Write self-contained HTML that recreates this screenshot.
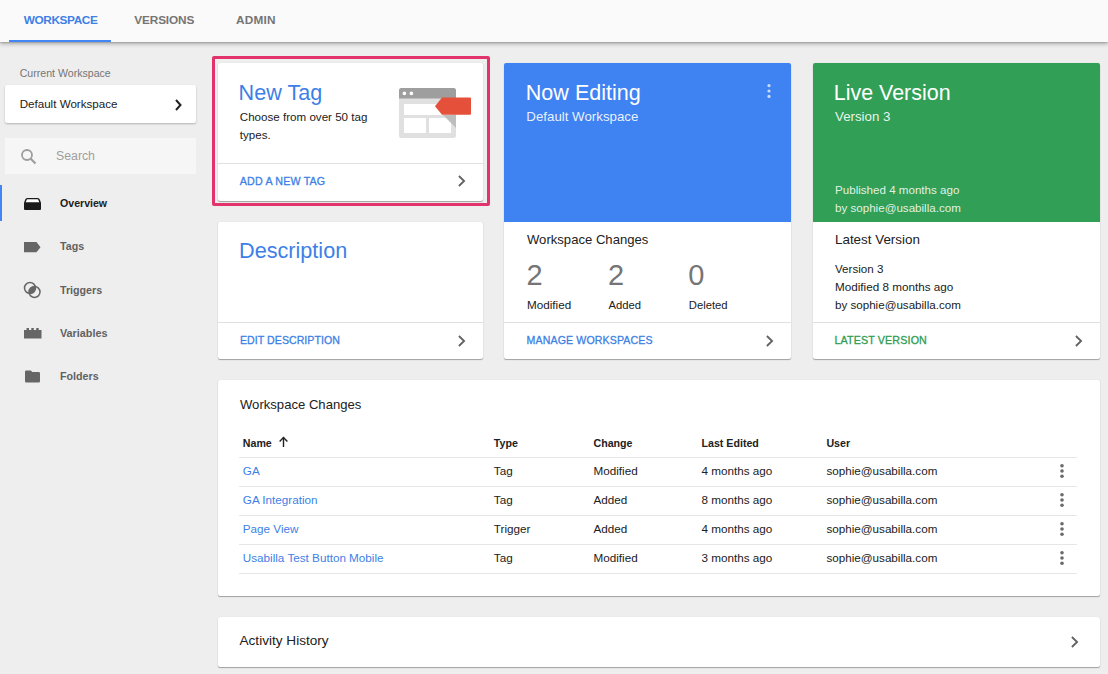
<!DOCTYPE html>
<html><head><meta charset="utf-8"><style>
html,body{margin:0;padding:0;}
body{width:1108px;height:674px;overflow:hidden;background:#eeeeee;position:relative;font-family:"Liberation Sans",sans-serif;}
.t{position:absolute;line-height:1;white-space:pre;}
div{box-sizing:border-box;}
</style></head><body>
<div style="position:absolute;left:0px;top:0px;width:1108px;height:42px;background:#fafafa;box-shadow:0 2px 4px rgba(0,0,0,0.28),0 1px 1px rgba(0,0,0,0.1);z-index:2"></div>
<div style="position:absolute;left:0;top:0;width:1108px;height:42px;z-index:3">
<div class="t" style="left:23.80px;top:15.01px;font-size:11.8px;font-weight:700;color:#3d7fe6;letter-spacing:-0.39px">WORKSPACE</div>
<div class="t" style="left:134.30px;top:15.01px;font-size:11.8px;font-weight:700;color:#757575;letter-spacing:-0.14px">VERSIONS</div>
<div class="t" style="left:236.10px;top:15.01px;font-size:11.8px;font-weight:700;color:#757575;letter-spacing:0.2px">ADMIN</div>
<div style="position:absolute;left:9px;top:40px;width:102px;height:2px;background:#4285f4"></div>
</div>
<div class="t" style="left:19.70px;top:67.93px;font-size:10.6px;font-weight:400;color:#757575;">Current Workspace</div>
<div style="position:absolute;left:5px;top:85px;width:191px;height:37.5px;background:#fff;border-radius:2px;box-shadow:0 1px 2px rgba(0,0,0,0.25)"></div>
<div class="t" style="left:19.70px;top:98.18px;font-size:11.6px;font-weight:400;color:#212121;">Default Workspace</div>
<svg style="position:absolute;left:173px;top:98px" width="10.5" height="14"><path d="M3.00 2 L7.50 7.00 L3.00 12" fill="none" stroke="#212121" stroke-width="2"/></svg>
<div style="position:absolute;left:5px;top:138px;width:191px;height:35.5px;background:#f6f6f6"></div>
<svg style="position:absolute;left:19px;top:147px" width="20" height="20"><circle cx="8" cy="8" r="5" fill="none" stroke="#9e9e9e" stroke-width="1.8"/><path d="M11.5 11.5 L16.5 16.5" stroke="#9e9e9e" stroke-width="2.2"/></svg>
<div class="t" style="left:56.00px;top:149.59px;font-size:12.3px;font-weight:400;color:#9e9e9e;">Search</div>
<div style="position:absolute;left:0px;top:185px;width:2px;height:36px;background:#4285f4"></div>
<svg style="position:absolute;left:24px;top:197px" width="18" height="14"><path d="M3.5 1 H13.5 Q15.5 1 16 3 L17 6 V12 Q17 13 16 13 H1 Q0 13 0 12 V6 L1 3 Q1.5 1 3.5 1 Z" fill="#1a1a1a"/><path d="M3.8 2.3 H13.2 Q14.3 2.3 14.6 3.4 L15.3 5.3 H1.7 L2.4 3.4 Q2.7 2.3 3.8 2.3 Z" fill="#fff"/></svg>
<div class="t" style="left:60.00px;top:198.03px;font-size:10.6px;font-weight:700;color:#212121;">Overview</div>
<svg style="position:absolute;left:24px;top:241.5px" width="17" height="11"><path d="M0 0 H12.5 L16.5 5.2 L12.5 10.3 H0 Z" fill="#666"/></svg>
<div class="t" style="left:60.00px;top:241.14px;font-size:10.7px;font-weight:700;color:#616161;">Tags</div>
<svg style="position:absolute;left:23px;top:281px" width="19" height="19"><defs><clipPath id="c1"><circle cx="7" cy="7" r="5.5"/></clipPath></defs><circle cx="11.5" cy="11" r="5.5" fill="#666" clip-path="url(#c1)"/><circle cx="7" cy="7" r="5.5" fill="none" stroke="#666" stroke-width="1.5"/><circle cx="11.5" cy="11" r="5.5" fill="none" stroke="#666" stroke-width="1.5"/></svg>
<div class="t" style="left:60.00px;top:284.94px;font-size:10.7px;font-weight:700;color:#616161;">Triggers</div>
<svg style="position:absolute;left:23.5px;top:327.5px" width="18" height="11"><path d="M0 2 H2.5 V0 H5 V2 H7.3 V0 H9.8 V2 H12.2 V0 H14.7 V2 H17.5 V10.5 H0 Z" fill="#666"/></svg>
<div class="t" style="left:60.00px;top:328.06px;font-size:10.8px;font-weight:700;color:#616161;">Variables</div>
<svg style="position:absolute;left:25px;top:369.5px" width="16" height="13"><path d="M1.2 0.5 H5.8 L7.3 2 H13.8 Q15 2 15 3.2 V11.3 Q15 12.5 13.8 12.5 H1.2 Q0 12.5 0 11.3 V1.7 Q0 0.5 1.2 0.5 Z" fill="#666"/></svg>
<div class="t" style="left:60.00px;top:371.04px;font-size:10.7px;font-weight:700;color:#616161;">Folders</div>
<div style="position:absolute;left:211.5px;top:56px;width:278.0px;height:150px;border:3px solid #e2336c;border-radius:2px;box-sizing:border-box"></div>
<div style="position:absolute;left:218px;top:63px;width:265px;height:137.5px;background:#fff;border-radius:2px;box-shadow:0 1px 1px rgba(0,0,0,0.32),0 0 1px rgba(0,0,0,0.12)"></div>
<div class="t" style="left:238.60px;top:81.72px;font-size:21.6px;font-weight:400;color:#3d7fe6;">New Tag</div>
<div class="t" style="left:239.80px;top:111.18px;font-size:11.6px;font-weight:400;color:#212121;">Choose from over 50 tag</div>
<div class="t" style="left:239.80px;top:128.78px;font-size:11.6px;font-weight:400;color:#212121;">types.</div>
<div style="position:absolute;left:218px;top:163px;width:265px;height:1px;background:#e0e0e0"></div>
<div class="t" style="left:239.80px;top:175.94px;font-size:10.7px;font-weight:400;color:#3d7fe6;-webkit-text-stroke:0.3px #3d7fe6;letter-spacing:0.17px">ADD A NEW TAG</div>
<svg style="position:absolute;left:456px;top:174px" width="11" height="14"><path d="M2.90 2 L8.10 7.00 L2.90 12" fill="none" stroke="#616161" stroke-width="1.8"/></svg>
<svg style="position:absolute;left:399px;top:88px" width="73" height="51"><rect x="0" y="0" width="57" height="50" rx="2.5" fill="#e0e0e0"/><path d="M2.5 0 H54.5 Q57 0 57 2.5 V10.5 H0 V2.5 Q0 0 2.5 0 Z" fill="#9e9e9e"/><circle cx="5.4" cy="5.4" r="1.8" fill="#fff"/><circle cx="12.4" cy="5.4" r="1.8" fill="#fff"/><rect x="5" y="16" width="47" height="11" fill="#fff"/><rect x="5" y="30" width="22" height="15" fill="#fff"/><rect x="30" y="30" width="22" height="15" fill="#fff"/><path d="M44 27 L57 27 L57 40 Z" fill="#bdbdbd"/><path d="M43 9.5 H71 Q72 9.5 72 10.5 V25.8 Q72 26.8 71 26.8 H43 L36 18.2 Z" fill="#e5503a"/></svg>
<div style="position:absolute;left:504px;top:63px;width:287px;height:295.5px;background:#fff;border-radius:2px;box-shadow:0 1px 1px rgba(0,0,0,0.32),0 0 1px rgba(0,0,0,0.12)"></div>
<div style="position:absolute;left:504px;top:63px;width:287px;height:158.5px;background:#3f82f2;border-radius:2px 2px 0 0"></div>
<div class="t" style="left:525.80px;top:81.76px;font-size:21.55px;font-weight:400;color:#fff;">Now Editing</div>
<div class="t" style="left:526.30px;top:109.54px;font-size:13.3px;font-weight:400;color:rgba(255,255,255,0.9);">Default Workspace</div>
<svg style="position:absolute;left:764.4px;top:80.8px" width="10" height="20"><circle cx="5" cy="4.60" r="1.6" fill="rgba(255,255,255,0.72)"/><circle cx="5" cy="10.00" r="1.6" fill="rgba(255,255,255,0.72)"/><circle cx="5" cy="15.40" r="1.6" fill="rgba(255,255,255,0.72)"/></svg>
<div class="t" style="left:527.00px;top:232.81px;font-size:13.1px;font-weight:400;color:#212121;">Workspace Changes</div>
<div class="t" style="left:526.50px;top:261.05px;font-size:29px;font-weight:300;color:#757575;">2</div>
<div class="t" style="left:527.00px;top:299.10px;font-size:11.7px;font-weight:400;color:#212121;">Modified</div>
<div class="t" style="left:607.90px;top:261.05px;font-size:29px;font-weight:300;color:#757575;">2</div>
<div class="t" style="left:608.40px;top:300.18px;font-size:11.25px;font-weight:400;color:#212121;">Added</div>
<div class="t" style="left:688.30px;top:261.05px;font-size:29px;font-weight:300;color:#757575;">0</div>
<div class="t" style="left:688.80px;top:300.18px;font-size:11.25px;font-weight:400;color:#212121;">Deleted</div>
<div style="position:absolute;left:504px;top:322px;width:287px;height:1px;background:#e0e0e0"></div>
<div class="t" style="left:526.50px;top:335.03px;font-size:10.6px;font-weight:400;color:#3d7fe6;-webkit-text-stroke:0.3px #3d7fe6;letter-spacing:0.13px">MANAGE WORKSPACES</div>
<svg style="position:absolute;left:764px;top:334px" width="11" height="14"><path d="M2.90 2 L8.10 7.00 L2.90 12" fill="none" stroke="#616161" stroke-width="1.8"/></svg>
<div style="position:absolute;left:813px;top:63px;width:287px;height:295.5px;background:#fff;border-radius:2px;box-shadow:0 1px 1px rgba(0,0,0,0.32),0 0 1px rgba(0,0,0,0.12)"></div>
<div style="position:absolute;left:813px;top:63px;width:287px;height:158.5px;background:#31a056;border-radius:2px 2px 0 0"></div>
<div class="t" style="left:833.80px;top:83.34px;font-size:21.45px;font-weight:400;color:#fff;">Live Version</div>
<div class="t" style="left:835.00px;top:109.54px;font-size:13.3px;font-weight:400;color:rgba(255,255,255,0.9);">Version 3</div>
<div class="t" style="left:835.00px;top:184.28px;font-size:11.6px;font-weight:400;color:rgba(255,255,255,0.87);">Published 4 months ago</div>
<div class="t" style="left:835.00px;top:202.18px;font-size:11.6px;font-weight:400;color:rgba(255,255,255,0.87);">by sophie@usabilla.com</div>
<div class="t" style="left:835.00px;top:232.66px;font-size:13.4px;font-weight:400;color:#212121;">Latest Version</div>
<div class="t" style="left:835.00px;top:262.88px;font-size:11.6px;font-weight:400;color:#212121;">Version 3</div>
<div class="t" style="left:835.00px;top:280.80px;font-size:11.7px;font-weight:400;color:#212121;">Modified 8 months ago</div>
<div class="t" style="left:835.00px;top:298.58px;font-size:11.6px;font-weight:400;color:#212121;">by sophie@usabilla.com</div>
<div style="position:absolute;left:813px;top:322px;width:287px;height:1px;background:#e0e0e0"></div>
<div class="t" style="left:834.40px;top:334.94px;font-size:10.7px;font-weight:400;color:#2e9d52;-webkit-text-stroke:0.3px #2e9d52;letter-spacing:0.15px">LATEST VERSION</div>
<svg style="position:absolute;left:1073px;top:334px" width="11" height="14"><path d="M2.90 2 L8.10 7.00 L2.90 12" fill="none" stroke="#616161" stroke-width="1.8"/></svg>
<div style="position:absolute;left:218px;top:222px;width:265px;height:136.5px;background:#fff;border-radius:2px;box-shadow:0 1px 1px rgba(0,0,0,0.32),0 0 1px rgba(0,0,0,0.12)"></div>
<div class="t" style="left:239.00px;top:239.67px;font-size:21.65px;font-weight:400;color:#3d7fe6;">Description</div>
<div style="position:absolute;left:218px;top:322px;width:265px;height:1px;background:#e0e0e0"></div>
<div class="t" style="left:240.00px;top:335.13px;font-size:10.6px;font-weight:400;color:#3d7fe6;-webkit-text-stroke:0.3px #3d7fe6;letter-spacing:0.04px">EDIT DESCRIPTION</div>
<svg style="position:absolute;left:456px;top:334px" width="11" height="14"><path d="M2.90 2 L8.10 7.00 L2.90 12" fill="none" stroke="#616161" stroke-width="1.8"/></svg>
<div style="position:absolute;left:218px;top:380px;width:882px;height:216px;background:#fff;border-radius:2px;box-shadow:0 1px 1px rgba(0,0,0,0.32),0 0 1px rgba(0,0,0,0.12)"></div>
<div class="t" style="left:240.00px;top:397.61px;font-size:13.1px;font-weight:400;color:#212121;">Workspace Changes</div>
<div class="t" style="left:242.80px;top:437.78px;font-size:10.65px;font-weight:700;color:#212121;">Name</div>
<div class="t" style="left:493.80px;top:437.78px;font-size:10.65px;font-weight:700;color:#212121;">Type</div>
<div class="t" style="left:593.50px;top:437.78px;font-size:10.65px;font-weight:700;color:#212121;">Change</div>
<div class="t" style="left:701.50px;top:437.78px;font-size:10.65px;font-weight:700;color:#212121;">Last Edited</div>
<div class="t" style="left:826.40px;top:437.78px;font-size:10.65px;font-weight:700;color:#212121;">User</div>
<svg style="position:absolute;left:277px;top:436px" width="13" height="13"><path d="M6.5 1.5 V11" stroke="#212121" stroke-width="1.4"/><path d="M2.6 5.4 L6.5 1.5 L10.4 5.4" fill="none" stroke="#212121" stroke-width="1.4"/></svg>
<div style="position:absolute;left:239px;top:457px;width:838px;height:1px;background:#e6e6e6"></div>
<div style="position:absolute;left:239px;top:486px;width:838px;height:1px;background:#e6e6e6"></div>
<div style="position:absolute;left:239px;top:515px;width:838px;height:1px;background:#e6e6e6"></div>
<div style="position:absolute;left:239px;top:544px;width:838px;height:1px;background:#e6e6e6"></div>
<div style="position:absolute;left:239px;top:573px;width:838px;height:1px;background:#e6e6e6"></div>
<div class="t" style="left:242.80px;top:464.90px;font-size:11.7px;font-weight:400;color:#3d7fe6;">GA</div>
<div class="t" style="left:493.80px;top:464.90px;font-size:11.7px;font-weight:400;color:#212121;">Tag</div>
<div class="t" style="left:593.50px;top:464.90px;font-size:11.7px;font-weight:400;color:#212121;">Modified</div>
<div class="t" style="left:701.50px;top:464.90px;font-size:11.7px;font-weight:400;color:#212121;">4 months ago</div>
<div class="t" style="left:826.40px;top:464.93px;font-size:11.66px;font-weight:400;color:#212121;">sophie@usabilla.com</div>
<svg style="position:absolute;left:1057px;top:460.8px" width="10" height="20"><circle cx="5" cy="4.80" r="1.8" fill="#6a6a6a"/><circle cx="5" cy="10.00" r="1.8" fill="#6a6a6a"/><circle cx="5" cy="15.20" r="1.8" fill="#6a6a6a"/></svg>
<div class="t" style="left:242.80px;top:493.90px;font-size:11.7px;font-weight:400;color:#3d7fe6;">GA Integration</div>
<div class="t" style="left:493.80px;top:493.90px;font-size:11.7px;font-weight:400;color:#212121;">Tag</div>
<div class="t" style="left:593.50px;top:493.90px;font-size:11.7px;font-weight:400;color:#212121;">Added</div>
<div class="t" style="left:701.50px;top:493.90px;font-size:11.7px;font-weight:400;color:#212121;">8 months ago</div>
<div class="t" style="left:826.40px;top:493.93px;font-size:11.66px;font-weight:400;color:#212121;">sophie@usabilla.com</div>
<svg style="position:absolute;left:1057px;top:489.8px" width="10" height="20"><circle cx="5" cy="4.80" r="1.8" fill="#6a6a6a"/><circle cx="5" cy="10.00" r="1.8" fill="#6a6a6a"/><circle cx="5" cy="15.20" r="1.8" fill="#6a6a6a"/></svg>
<div class="t" style="left:242.80px;top:522.90px;font-size:11.7px;font-weight:400;color:#3d7fe6;">Page View</div>
<div class="t" style="left:493.80px;top:522.90px;font-size:11.7px;font-weight:400;color:#212121;">Trigger</div>
<div class="t" style="left:593.50px;top:522.90px;font-size:11.7px;font-weight:400;color:#212121;">Added</div>
<div class="t" style="left:701.50px;top:522.90px;font-size:11.7px;font-weight:400;color:#212121;">4 months ago</div>
<div class="t" style="left:826.40px;top:522.93px;font-size:11.66px;font-weight:400;color:#212121;">sophie@usabilla.com</div>
<svg style="position:absolute;left:1057px;top:518.8px" width="10" height="20"><circle cx="5" cy="4.80" r="1.8" fill="#6a6a6a"/><circle cx="5" cy="10.00" r="1.8" fill="#6a6a6a"/><circle cx="5" cy="15.20" r="1.8" fill="#6a6a6a"/></svg>
<div class="t" style="left:242.80px;top:551.90px;font-size:11.7px;font-weight:400;color:#3d7fe6;">Usabilla Test Button Mobile</div>
<div class="t" style="left:493.80px;top:551.90px;font-size:11.7px;font-weight:400;color:#212121;">Tag</div>
<div class="t" style="left:593.50px;top:551.90px;font-size:11.7px;font-weight:400;color:#212121;">Modified</div>
<div class="t" style="left:701.50px;top:551.90px;font-size:11.7px;font-weight:400;color:#212121;">3 months ago</div>
<div class="t" style="left:826.40px;top:551.93px;font-size:11.66px;font-weight:400;color:#212121;">sophie@usabilla.com</div>
<svg style="position:absolute;left:1057px;top:547.8px" width="10" height="20"><circle cx="5" cy="4.80" r="1.8" fill="#6a6a6a"/><circle cx="5" cy="10.00" r="1.8" fill="#6a6a6a"/><circle cx="5" cy="15.20" r="1.8" fill="#6a6a6a"/></svg>
<div style="position:absolute;left:218px;top:617px;width:882px;height:49.5px;background:#fff;border-radius:2px;box-shadow:0 1px 1px rgba(0,0,0,0.32),0 0 1px rgba(0,0,0,0.12)"></div>
<div class="t" style="left:239.50px;top:634.49px;font-size:13.6px;font-weight:400;color:#212121;">Activity History</div>
<svg style="position:absolute;left:1069px;top:635px" width="11" height="14"><path d="M2.90 2 L8.10 7.00 L2.90 12" fill="none" stroke="#616161" stroke-width="1.8"/></svg>
</body></html>
